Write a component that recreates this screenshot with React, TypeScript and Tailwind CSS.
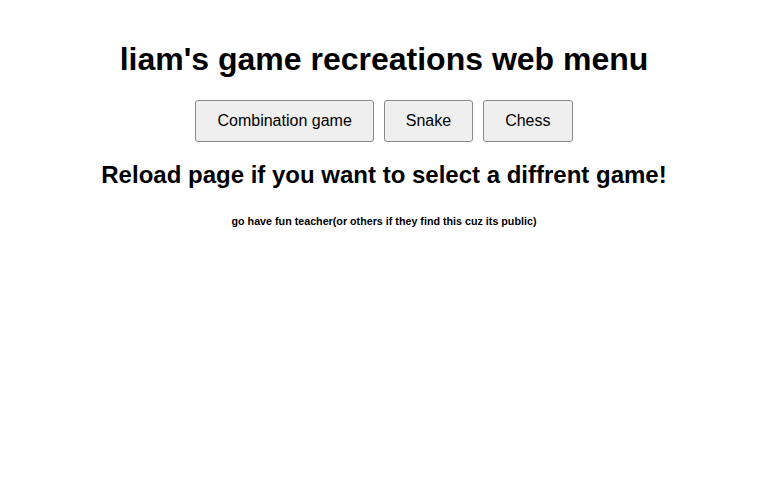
export default function App() {
  const games = ["Combination game", "Snake", "Chess"];
  return (
    <div
      className="min-h-[480px] bg-white text-center text-black pt-[20px]"
      style={{ fontFamily: '"Liberation Sans", Arial, sans-serif' }}
    >
      <h1 className="mt-[21.44px] mb-[21.44px] text-[32px] leading-[36.8px] font-bold">
        liam's game recreations web menu
      </h1>
      <div className="flex justify-center gap-[10px]">
        {games.map((g) => (
          <button
            key={g}
            className="px-[21px] py-[11px] text-[16px] leading-[18.4px] bg-[#efefef] border border-[#8a8a8a] rounded-[3px] text-black"
          >
            {g}
          </button>
        ))}
      </div>
      <h2 className="mt-[19px] text-[24px] leading-[27.6px] font-bold">
        Reload page if you want to select a diffrent game!
      </h2>
      <h6 className="mt-[26px] text-[10.72px] leading-[12.3px] font-bold">
        go have fun teacher(or others if they find this cuz its public)
      </h6>
    </div>
  );
}
